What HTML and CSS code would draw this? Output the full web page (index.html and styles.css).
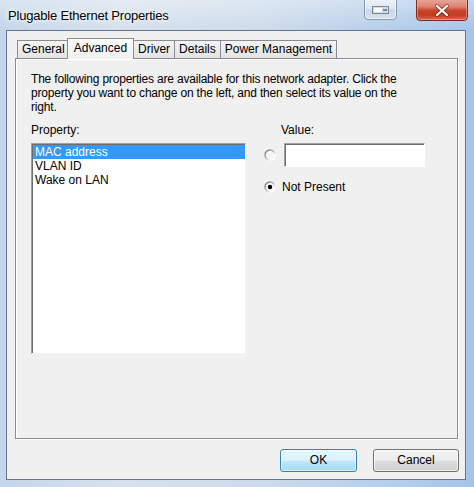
FILE: index.html
```html
<!DOCTYPE html>
<html>
<head>
<meta charset="utf-8">
<link rel="stylesheet" href="styles.css">
</head>
<body>
<div class="window">
  <div class="titlebar">
    <span class="title">Plugable Ethernet Properties</span>
    <div class="caption-buttons">
      <div class="cap-btn extra">
        <svg width="18" height="9" viewBox="0 0 18 9">
          <rect x="0.5" y="0.5" width="16" height="7" fill="#d6dce4" stroke="#7a8796"/>
          <rect x="2" y="2" width="8" height="4" fill="#ffffff"/>
          <rect x="11" y="3" width="4" height="2" fill="#7a8796"/>
        </svg>
      </div>
      <div class="cap-btn close">
        <svg width="16" height="13" viewBox="0 0 16 13">
          <path d="M3 2 L13 11 M13 2 L3 11" stroke="#5a1a10" stroke-opacity="0.55" stroke-width="4" stroke-linecap="round"/>
          <path d="M3 2 L13 11 M13 2 L3 11" stroke="#ffffff" stroke-width="2.2" stroke-linecap="round"/>
        </svg>
      </div>
    </div>
  </div>
  <div class="client">
    <div class="tabs">
      <div class="tab">General</div>
      <div class="tab selected">Advanced</div>
      <div class="tab">Driver</div>
      <div class="tab">Details</div>
      <div class="tab">Power Management</div>
    </div>
    <div class="panel">
      <p class="intro">The following properties are available for this network adapter. Click the property you want to change on the left, and then select its value on the right.</p>
      <div class="props">
        <div class="prop-col">
          <div class="label">Property:</div>
          <ul class="listbox">
            <li class="item selected">MAC address</li>
            <li class="item">VLAN ID</li>
            <li class="item">Wake on LAN</li>
          </ul>
        </div>
        <div class="value-col">
          <div class="label value-label">Value:</div>
          <div class="value-row">
            <svg class="radio" width="12" height="12" viewBox="0 0 12 12">
              <defs>
                <linearGradient id="rg1" x1="0" y1="0" x2="1" y2="1">
                  <stop offset="0" stop-color="#6e6e6e"/>
                  <stop offset="0.5" stop-color="#b8b8b8"/>
                  <stop offset="0.75" stop-color="#ffffff"/>
                  <stop offset="1" stop-color="#ffffff"/>
                </linearGradient>
              </defs>
              <circle cx="6" cy="6" r="5" fill="#f6f6f6" stroke="url(#rg1)" stroke-width="1.4"/>
            </svg>
            <div class="textbox"></div>
          </div>
          <div class="value-row option">
            <svg class="radio" width="12" height="12" viewBox="0 0 12 12">
              <defs>
                <linearGradient id="rg2" x1="0" y1="0" x2="1" y2="1">
                  <stop offset="0" stop-color="#6e6e6e"/>
                  <stop offset="0.5" stop-color="#b8b8b8"/>
                  <stop offset="0.75" stop-color="#ffffff"/>
                  <stop offset="1" stop-color="#ffffff"/>
                </linearGradient>
              </defs>
              <circle cx="6" cy="6" r="5" fill="#f6f6f6" stroke="url(#rg2)" stroke-width="1.4"/>
              <circle cx="6" cy="6" r="2.2" fill="#000000"/>
            </svg>
            <span class="option-text">Not Present</span>
          </div>
        </div>
      </div>
    </div>
    <div class="buttons">
      <div class="btn default">OK</div>
      <div class="btn">Cancel</div>
    </div>
  </div>
</div>
</body>
</html>
```

FILE: styles.css
```css
* {
  box-sizing: border-box;
}

html, body {
  margin: 0;
  padding: 0;
}

body {
  width: 474px;
  height: 487px;
  overflow: hidden;
  font-family: "Liberation Sans", Arial, sans-serif;
  font-size: 12px;
  color: #000;
}

.window {
  display: flex;
  flex-direction: column;
  height: 487px;
  background:
    linear-gradient(to bottom, rgba(255,255,255,0.35), rgba(255,255,255,0) 30px),
    linear-gradient(to right, #c4d6ea 0%, #d6e1ed 25%, #cddbeb 55%, #b3cdea 85%, #a6c4e8 100%);
}

.titlebar {
  height: 30px;
  display: flex;
  align-items: flex-start;
  flex-shrink: 0;
}

.title {
  margin-top: 8px;
  padding-left: 8px;
  font-size: 13px;
  line-height: 16px;
  letter-spacing: -0.2px;
  text-shadow: 0 0 6px rgba(255, 255, 255, 0.95), 0 0 3px rgba(255, 255, 255, 0.9);
}

.caption-buttons {
  margin-left: auto;
  margin-right: 6px;
  display: flex;
  align-items: flex-start;
  gap: 19px;
}

.cap-btn {
  display: flex;
  align-items: center;
  justify-content: center;
  border-radius: 0 0 4px 4px;
}

.cap-btn.extra {
  width: 33px;
  height: 22px;
  margin-top: -2px;
  padding-top: 3px;
  border: 1px solid #8796aa;
  background: linear-gradient(to bottom, #eef3f9 0%, #dfe7f1 45%, #cbd8e8 55%, #d6e2ef 100%);
  box-shadow: inset 0 0 0 1px rgba(255, 255, 255, 0.6);
}

.cap-btn.close {
  width: 52px;
  height: 23px;
  margin-top: -2px;
  padding-top: 2px;
  border: 1px solid #7a2a1c;
  background: linear-gradient(to bottom, #e9a89a 0%, #de8675 35%, #c8442b 55%, #c23a20 75%, #d86b4e 100%);
  box-shadow: inset 0 0 0 1px rgba(255, 200, 190, 0.45);
}

.client {
  flex: 1;
  margin: 0 8px 7px 6px;
  border: 1px solid #62778f;
  background: #f0f0f0;
  display: flex;
  flex-direction: column;
  padding: 7px 7px 7px 8px;
}

.tabs {
  display: flex;
  align-items: flex-end;
  height: 21px;
  padding-left: 2px;
  position: relative;
  z-index: 1;
  flex-shrink: 0;
}

.tab {
  height: 18px;
  margin-bottom: 1px;
  margin-right: -1px;
  padding: 0 4px;
  line-height: 17px;
  border: 1px solid #898c95;
  border-bottom: none;
  background: linear-gradient(to bottom, #f4f4f4 0%, #ececec 50%, #e3e3e3 100%);
  white-space: nowrap;
}

.tab.selected {
  height: 21px;
  margin: 0 -1px 0 -2px;
  padding: 0 6px;
  line-height: 18px;
  background: linear-gradient(to bottom, #fdfdfd 0%, #f4f4f4 60%, #f0f0f0 100%);
  position: relative;
  z-index: 2;
}

.panel {
  flex: 1;
  margin-top: -1px;
  border: 1px solid #898c95;
  background: #f0f0f0;
  box-shadow: 1px 1px 0 #ffffff, inset 1px 1px 0 #ffffff;
  padding: 13px 15px 0 15px;
}

.intro {
  margin: 0;
  max-width: 372px;
  line-height: 14px;
  letter-spacing: -0.19px;
}

.props {
  display: flex;
  margin-top: 9px;
}

.prop-col {
  width: 215px;
  display: flex;
  flex-direction: column;
}

.label {
  line-height: 14px;
  margin-bottom: 6px;
}

.listbox {
  list-style: none;
  margin: 0;
  padding: 0;
  height: 211px;
  background: #ffffff;
  border: 1px solid;
  border-color: #a0a0a0 #f4f4f4 #f4f4f4 #a0a0a0;
  box-shadow: inset 1px 1px 0 #6e6e6e;
  padding: 1px 0 0 1px;
}

.item {
  height: 14px;
  line-height: 14px;
  padding-left: 2px;
}

.item.selected {
  background: #3399ff;
  color: #ffffff;
}

.value-col {
  margin-left: 18px;
  display: flex;
  flex-direction: column;
}

.value-label {
  margin-left: 17px;
}

.value-row {
  display: flex;
  align-items: center;
}

.value-row .radio {
  flex-shrink: 0;
  margin-right: 8px;
}

.textbox {
  width: 141px;
  height: 24px;
  background: #ffffff;
  border: 1px solid;
  border-color: #a0a0a0 #ffffff #ffffff #a0a0a0;
  box-shadow: inset 1px 1px 0 #6e6e6e;
}

.value-row.option {
  margin-top: 13px;
  height: 14px;
}

.value-row.option .radio {
  margin-right: 6px;
}

.option-text {
  line-height: 14px;
}

.buttons {
  display: flex;
  justify-content: flex-end;
  gap: 16px;
  margin-top: 10px;
  margin-right: -1px;
  flex-shrink: 0;
}

.btn {
  width: 86px;
  height: 23px;
  line-height: 21px;
  text-align: center;
  border: 1px solid #707070;
  border-radius: 3px;
  background: linear-gradient(to bottom, #f2f2f2 0%, #ebebeb 50%, #dddddd 52%, #cfcfcf 100%);
  box-shadow: inset 0 0 0 1px rgba(255, 255, 255, 0.7);
}

.btn.default {
  width: 77px;
  border-color: #3c7fb1;
  background: linear-gradient(to bottom, #eaf6fd 0%, #d9f0fc 50%, #bee6fd 52%, #a7d9f5 100%);
  box-shadow: inset 0 0 0 1px rgba(255, 255, 255, 0.6);
}
```
